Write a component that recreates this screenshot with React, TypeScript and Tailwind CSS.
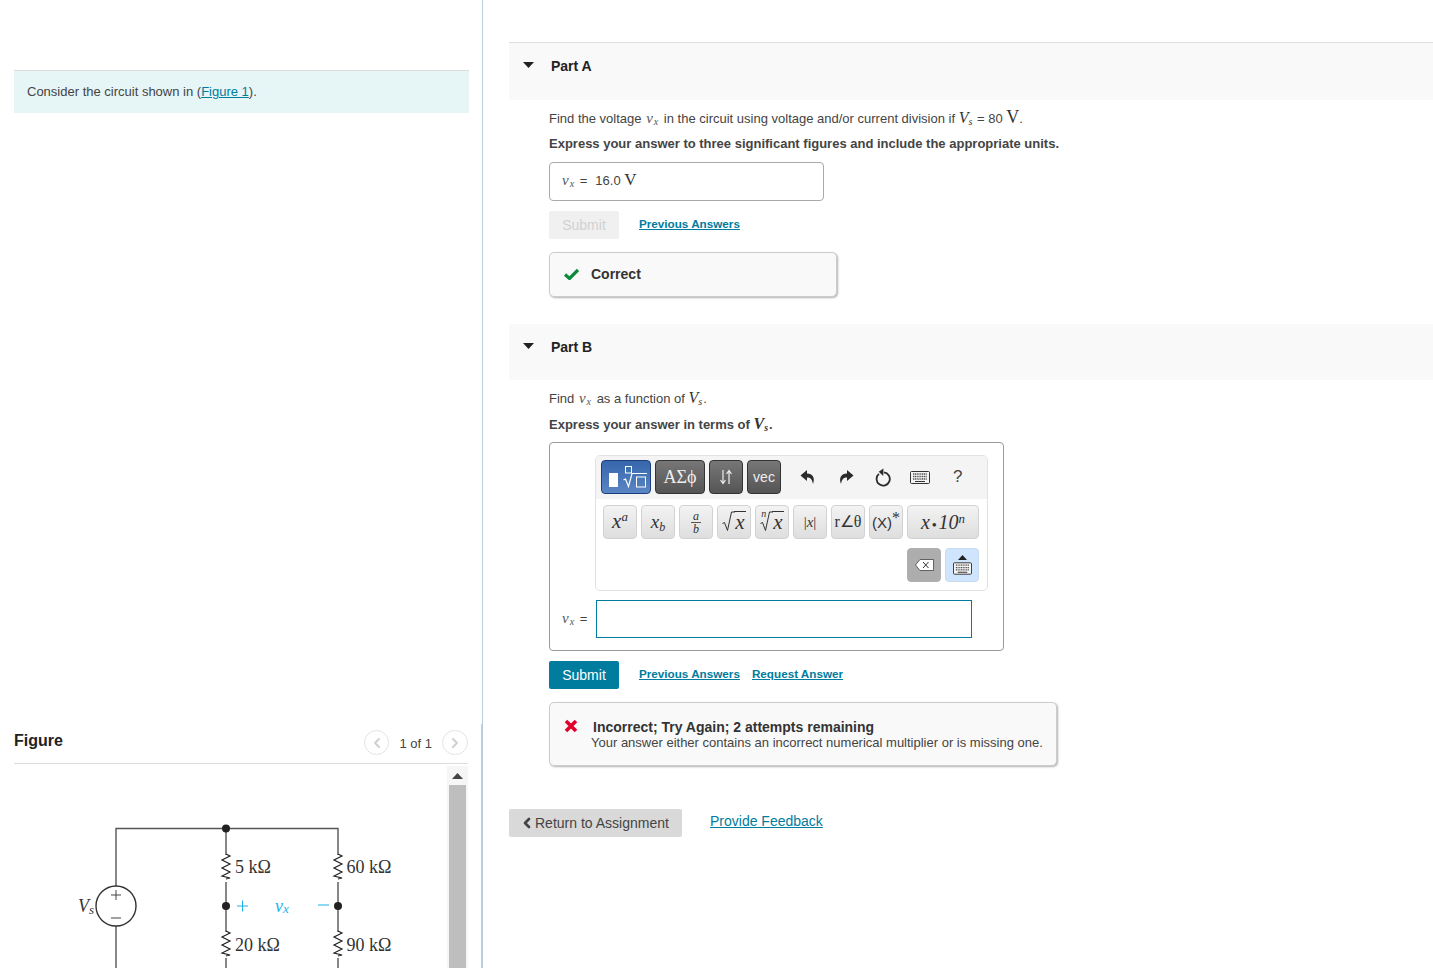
import React from 'react';
import { ChevronLeft, ChevronRight } from 'lucide-react';

const sans = { fontFamily: '"Liberation Sans", Arial, sans-serif' };

const Vx = () => (
  <span className="font-['Liberation_Serif'] italic text-[15px] text-[#555] px-[1px] tracking-[1px]">
    v<sub className="text-[10px] align-[-2px] bottom-0 leading-none">x</sub>
  </span>
);

const Vs = () => (
  <span className="font-['Liberation_Serif'] italic text-[16px] text-[#333] pr-[1px]">
    V<sub className="text-[10px] align-[-2px] bottom-0 leading-none">s</sub>
  </span>
);

const Keyboard = ({ className }: { className?: string }) => (
  <svg viewBox="0 0 20 13" className={className}>
    <rect x="0.5" y="0.5" width="19" height="12" rx="1" fill="#f4f4f4" stroke="#333" />
    <path d="M3 3h14M3 5.5h14M3 8h14" stroke="#555" strokeWidth="1.4" strokeDasharray="1.2 .6" />
    <path d="M5 10.5h10" stroke="#333" strokeWidth="1.2" />
  </svg>
);

const DarkButton = ({ width, children }: { width: string; children: React.ReactNode }) => (
  <div className={`${width} h-[34px] rounded-[4px] border border-[#333] bg-gradient-to-b from-[#777] to-[#555] text-[#eee] flex items-center justify-center`}>
    {children}
  </div>
);

const MathKey = ({ width = 'w-[34px]', children }: { width?: string; children: React.ReactNode }) => (
  <div className={`${width} h-[34px] rounded-[4px] border border-[#d2d2d2] bg-gradient-to-b from-[#f3f3f3] to-[#dedede] text-[#333] flex items-center justify-center font-['Liberation_Serif'] text-[17px]`}>
    {children}
  </div>
);

const Link = ({ children }: { children: React.ReactNode }) => (
  <a className="text-[#007c9e] underline font-bold text-[11.7px]">{children}</a>
);

const PartHeader = ({ title, height }: { title: string; height: string }) => (
  <div className={`${height} bg-[#f9f9f9] flex items-start pt-[13px] pl-[14px]`}>
    <svg viewBox="0 0 11 6" className="w-[11px] h-[6px] mt-[6px]">
      <path d="M0 0h11L5.5 6z" fill="#222" />
    </svg>
    <span className="ml-[17px] text-[14px] font-bold text-[#222] leading-[20px]">{title}</span>
  </div>
);

const Zigzag = ({ x, y }: { x: number; y: number }) => (
  <path
    d={`M${x} ${y}l4 2-8 4 8 4-8 4 8 4-8 4 8 2-4 1`}
    fill="none"
    stroke="#222"
    strokeWidth="1.2"
  />
);

const Circuit = () => (
  <svg viewBox="14 766 433 202" className="w-[433px] h-[202px] shrink-0">
    <path d="M116 968V926M116 886V828.5H338V855M226 828.5V855M226 882V932M226 958V968M338 882V932M338 958V968" fill="none" stroke="#555" strokeWidth="1.4" />
    <Zigzag x={226} y={854} />
    <Zigzag x={338} y={854} />
    <Zigzag x={226} y={931} />
    <Zigzag x={338} y={931} />
    <circle cx="226" cy="828.5" r="4" fill="#222" />
    <circle cx="226" cy="906" r="4" fill="#222" />
    <circle cx="338" cy="906" r="4" fill="#222" />
    <circle cx="116" cy="906" r="20" fill="none" stroke="#333" strokeWidth="1.4" />
    <path d="M111 895h10M116 890v10M111 918h10" stroke="#444" strokeWidth="1" />
    <path d="M237 906h11M242.5 900.5v11M318 905h11" stroke="#1fb1ea" strokeWidth="1" />
    <g fontFamily="Liberation Serif" fontSize="18" fill="#333">
      <text x="235" y="873">5 kΩ</text>
      <text x="346.5" y="873">60 kΩ</text>
      <text x="235" y="951">20 kΩ</text>
      <text x="346.5" y="951">90 kΩ</text>
      <text x="78" y="912" fontStyle="italic">V<tspan fontSize="13" dy="2">s</tspan></text>
      <text x="275" y="912" fontStyle="italic" fill="#1fb1ea" fontSize="18">v<tspan fontSize="13" dy="1">x</tspan></text>
    </g>
  </svg>
);

export default function App() {
  return (
    <div style={sans} className="flex h-[968px] w-[1433px] overflow-hidden bg-white text-[13px] text-[#444]">
      <aside className="relative w-[483px] h-full shrink-0 flex flex-col pl-[14px] pt-[70px] border-r border-[#b9cfe0]">
        <div className="absolute right-0 bottom-0 w-[1px] h-[244px] bg-[#b9cfe0]" />
        <div className="w-[455px] h-[43px] border-t border-[#dcdcdc] bg-[#e6f5f6] pl-[13px] flex items-center text-[13px] text-[#444]">
          <span>
            Consider the circuit shown in (<a className="text-[#007c9e] underline">Figure 1</a>).
          </span>
        </div>

        <div className="mt-auto w-[454px] h-[43px] border-b border-[#dcdcdc] flex items-center justify-between">
          <span className="text-[16px] font-bold text-[#222] -mt-[2px]">Figure</span>
          <div className="flex items-center text-[13px] text-[#444] mt-[1px]">
            <span className="w-[25px] h-[25px] rounded-full border border-[#e4e4e4] flex items-center justify-center">
              <ChevronLeft size={16} strokeWidth={3} className="text-[#cfcfcf]" />
            </span>
            <span className="mx-[10px] mt-[2px]">1 of 1</span>
            <span className="w-[26px] h-[25px] rounded-full border border-[#e4e4e4] flex items-center justify-center">
              <ChevronRight size={16} strokeWidth={3} className="text-[#cfcfcf]" />
            </span>
          </div>
        </div>

        <div className="h-[204px] w-[454px] flex pt-[2px]">
          <Circuit />
          <div className="w-[21px] h-full bg-[#f6f6f6] flex flex-col">
            <svg viewBox="0 0 11 6" className="w-[11px] h-[6px] mt-[7px] mb-[6px] ml-[5px]">
              <path d="M0 6h11L5.5 0z" fill="#444" />
            </svg>
            <div className="w-[17px] ml-[2px] flex-1 bg-[#bebebe]" />
          </div>
        </div>
      </aside>

      <main className="flex-1 pl-[26px] pt-[42px]">
        <div className="border-t border-[#dedede]">
          <PartHeader title="Part A" height="h-[57px]" />
        </div>

        <div className="pl-[40px]">
          <p className="mt-[7px] h-[20px] leading-[20px]">
            Find the voltage <Vx /> in the circuit using voltage and/or current division if <Vs /> = 80{' '}
            <span className="font-['Liberation_Serif'] text-[18px] text-[#333]">V</span>.
          </p>
          <p className="mt-[7px] h-[20px] leading-[20px] font-bold">
            Express your answer to three significant figures and include the appropriate units.
          </p>
          <div className="mt-[8px] w-[275px] h-[39px] rounded-[4px] border border-[#aaa] pl-[11px] pb-[3px] flex items-center gap-[8px]">
            <span>
              <Vx /> =
            </span>
            <span>
              16.0 <span className="font-['Liberation_Serif'] text-[17px] text-[#333]">V</span>
            </span>
          </div>
          <div className="mt-[10px] flex items-start">
            <div className="w-[70px] h-[28px] rounded-[2px] bg-[#f0f0f0] text-[#d0d0d0] text-[14px] flex items-center justify-center">Submit</div>
            <div className="ml-[20px] mt-[3px]">
              <Link>Previous Answers</Link>
            </div>
          </div>
          <div className="mt-[13px] w-[288px] h-[45px] rounded-[5px] border border-[#ccc] bg-[#f9f9f9] shadow-[1px_1px_2px_rgba(0,0,0,0.3)] flex items-center pl-[14px]">
            <svg viewBox="0 0 15 12" className="w-[15px] h-[12px] -mt-[1px]">
              <path d="M1 6.5l4.5 4L14 2" fill="none" stroke="#0b8a3c" strokeWidth="3.2" />
            </svg>
            <span className="ml-[12px] text-[14px] font-bold text-[#333]">Correct</span>
          </div>
        </div>

        <div className="mt-[27px]">
          <PartHeader title="Part B" height="h-[56px]" />
        </div>

        <div className="pl-[40px]">
          <p className="mt-[8px] h-[20px] leading-[20px]">
            Find <Vx /> as a function of <Vs />.
          </p>
          <p className="mt-[6px] h-[20px] leading-[20px] font-bold">
            Express your answer in terms of <Vs />.
          </p>

          <div className="mt-[8px] w-[455px] h-[209px] rounded-[4px] border border-[#999] pl-[45px] pt-[12px]">
            <div className="w-[393px] h-[136px] rounded-[5px] border border-[#e2e2e2] overflow-hidden">
              <div className="h-[43px] bg-[#f4f4f4] flex items-start pt-[4px] pl-[5px] gap-[4px]">
                <div className="w-[50px] h-[34px] rounded-[4px] border border-[#1c3f7c] bg-gradient-to-b from-[#3766ad] to-[#5b86c4] flex items-start pl-[7px] pt-[5px] gap-[5px]">
                  <div className="w-[9px] h-[14px] bg-white mt-[7px]" />
                  <svg viewBox="0 0 24 22" className="w-[24px] h-[22px]">
                    <path d="M0.5 14l2-1 3 7.5 3.5-13h15" fill="none" stroke="#fff" strokeWidth="1.2" />
                    <rect x="2.5" y="0.5" width="6" height="6.5" fill="none" stroke="#fff" />
                    <rect x="13.5" y="11" width="9" height="10" fill="none" stroke="#fff" />
                  </svg>
                </div>
                <DarkButton width="w-[50px]">
                  <span className="font-['Liberation_Serif'] text-[18px]">ΑΣϕ</span>
                </DarkButton>
                <DarkButton width="w-[34px]">
                  <svg viewBox="0 0 14 16" className="w-[14px] h-[16px]">
                    <path d="M4 1v13M1.5 11L4 14.5 6.5 11M10 15V2M7.5 5L10 1.5 12.5 5" fill="none" stroke="#eee" strokeWidth="1.2" />
                  </svg>
                </DarkButton>
                <DarkButton width="w-[34px]">
                  <span className="text-[14px]">vec</span>
                </DarkButton>
                <div className="ml-[15px] h-[34px] flex items-center text-[#333]">
                  <span className="w-[16px] flex justify-center">
                    <svg viewBox="0 0 16 16" className="w-[16px] h-[16px]">
                      <path d="M7 1L0.5 6.5 7 12V8.6c3.3 0 5 1.4 6 6.4 2.4-6-.3-10.4-6-10.4z" fill="#2b2b2b" />
                    </svg>
                  </span>
                  <span className="ml-[22px] w-[16px] flex justify-center">
                    <svg viewBox="0 0 16 16" className="w-[16px] h-[16px]">
                      <path d="M9 1l6.5 5.5L9 12V8.6c-3.3 0-5 1.4-6 6.4-2.4-6 .3-10.400 6-10.400z" fill="#2b2b2b" />
                    </svg>
                  </span>
                  <span className="ml-[20px] w-[17px] flex justify-center">
                    <svg viewBox="0 0 18 20" className="w-[17px] h-[19px]">
                      <path d="M5.2 6.2a7 7 0 1 0 5.3-1.6" fill="none" stroke="#2b2b2b" strokeWidth="1.9" />
                      <path d="M10 0.5l-.2 8L5 4z" fill="#2b2b2b" />
                    </svg>
                  </span>
                  <span className="ml-[19px]">
                    <Keyboard className="w-[20px] h-[13px] block" />
                  </span>
                  <span className="ml-[23px] text-[17px] text-[#444]">?</span>
                </div>
              </div>

              <div className="pl-[7px] pt-[6px] flex gap-[4px]">
                <MathKey>
                  <span className="italic text-[21px]">x<sup className="text-[13px] align-[7px] top-0 leading-none">a</sup></span>
                </MathKey>
                <MathKey>
                  <span className="italic text-[19px]">x<sub className="text-[12px] align-[-3px] bottom-0 leading-none">b</sub></span>
                </MathKey>
                <MathKey>
                  <span className="italic text-[12px] leading-[12px] flex flex-col items-center">
                    <span className="border-b border-[#555] px-[2px]">a</span>
                    <span>b</span>
                  </span>
                </MathKey>
                <MathKey>
                  <span className="relative italic text-[21px] leading-[21px] pl-[12px]">
                    <svg viewBox="0 0 13 20" className="absolute left-0 top-0 w-[13px] h-[21px]">
                      <path d="M0.5 12l2-1 3 8 4-18.500h4" fill="none" stroke="#333" />
                    </svg>
                    <span className="inline-block border-t border-[#333] px-[1px]">x</span>
                  </span>
                </MathKey>
                <MathKey>
                  <span className="relative italic text-[21px] leading-[21px] pl-[12px]">
                    <svg viewBox="0 0 13 20" className="absolute left-0 top-0 w-[13px] h-[21px]">
                      <path d="M0.5 12l2-1 3 8 4-18.500h4" fill="none" stroke="#333" />
                    </svg>
                    <span className="absolute left-[1px] top-[-3px] text-[10px] leading-[12px]">n</span>
                    <span className="inline-block border-t border-[#333] px-[1px]">x</span>
                  </span>
                </MathKey>
                <MathKey>
                  <span className="text-[15px]">|<i>x</i>|</span>
                </MathKey>
                <MathKey>
                  <span className="text-[16px]">r∠θ</span>
                </MathKey>
                <MathKey>
                  <span style={sans} className="text-[15px]">(X)<sup className="font-['Liberation_Serif'] text-[16px] align-[5px] top-0 leading-none">*</sup></span>
                </MathKey>
                <MathKey width="w-[72px]">
                  <span className="italic text-[20px]">x<span className="not-italic font-bold text-[13px] mx-[2px]">•</span>10<sup className="text-[13px] align-[6px] top-0 leading-none">n</sup></span>
                </MathKey>
              </div>

              <div className="pl-[311px] pt-[9px] flex gap-[4px]">
                <div className="w-[34px] h-[34px] rounded-[4px] border border-[#b0b0b0] bg-[#adadad] flex items-center justify-center">
                  <svg viewBox="0 0 19 12" className="w-[19px] h-[12px]">
                    <path d="M5 .5h13.5v11H5L.5 6z" fill="#fff" stroke="#444" strokeWidth=".8" />
                    <path d="M8 3l5.500 6M13.500 3L8 9" stroke="#333" strokeWidth="1" />
                  </svg>
                </div>
                <div className="w-[34px] h-[34px] rounded-[4px] border border-[#c6daf0] bg-[#cfe5fd] flex flex-col items-center justify-center gap-[2px]">
                  <svg viewBox="0 0 9 5" className="w-[9px] h-[5px]">
                    <path d="M0 5h9L4.500 0z" fill="#222" />
                  </svg>
                  <Keyboard className="w-[19px] h-[13px] block" />
                </div>
              </div>
            </div>

            <div className="mt-[9px] -ml-[45px] flex items-center">
              <span className="w-[46px] pl-[11px] pb-[2px] whitespace-nowrap">
                <Vx /> =
              </span>
              <div className="w-[376px] h-[38px] border border-[#007c9e] bg-white" />
            </div>
          </div>

          <div className="mt-[10px] flex items-start">
            <div className="w-[70px] h-[28px] rounded-[2px] bg-[#007c9e] text-white text-[14px] flex items-center justify-center">Submit</div>
            <div className="ml-[20px] mt-[4px] flex gap-[12px]">
              <Link>Previous Answers</Link>
              <Link>Request Answer</Link>
            </div>
          </div>

          <div className="mt-[13px] w-[508px] h-[64px] rounded-[5px] border border-[#ccc] bg-[#f9f9f9] shadow-[1px_1px_2px_rgba(0,0,0,0.3)] flex pl-[14px] pt-[15px]">
            <svg viewBox="0 0 14 14" className="w-[14px] h-[14px] mt-[1px]">
              <path d="M2 2l10 10M12 2L2 12" stroke="#e2002b" strokeWidth="3.6" />
            </svg>
            <div className="ml-[13px]">
              <div className="text-[14px] font-bold text-[#333] leading-[18px] ml-[2px]">Incorrect; Try Again; 2 attempts remaining</div>
              <div className="text-[13px] text-[#444] leading-[14px]">Your answer either contains an incorrect numerical multiplier or is missing one.</div>
            </div>
          </div>
        </div>

        <div className="mt-[43px] flex items-start">
          <div className="w-[173px] h-[28px] rounded-[2px] bg-[#d9d9d9] flex items-center pl-[12px] text-[14px] text-[#444]">
            <ChevronLeft size={16} strokeWidth={4} className="text-[#444] -ml-[2px]" />
            <span>Return to Assignment</span>
          </div>
          <a className="ml-[28px] mt-[2px] text-[14px] text-[#007c9e] underline">Provide Feedback</a>
        </div>
      </main>
    </div>
  );
}
